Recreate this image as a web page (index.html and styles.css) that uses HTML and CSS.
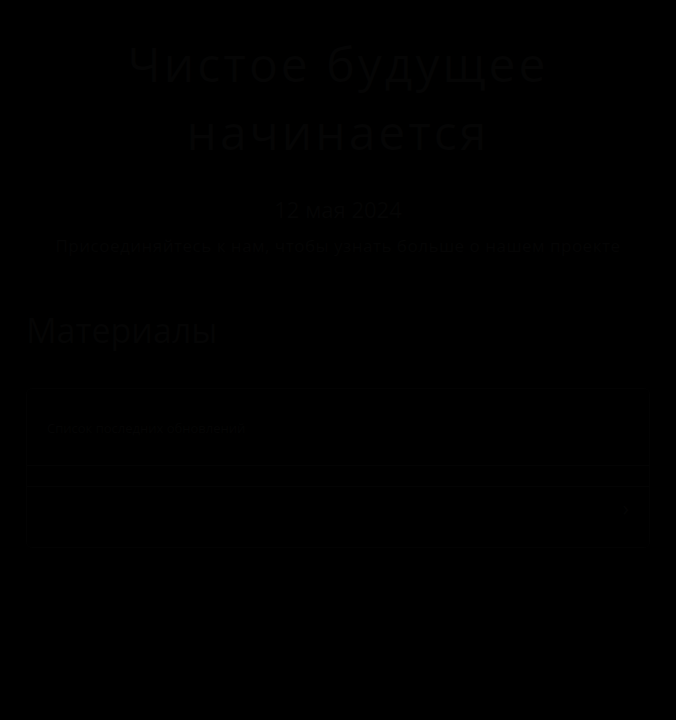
FILE: index.html
```html
<!DOCTYPE html>
<html lang="ru">
<head>
<meta charset="utf-8">
<title>Page</title>
<link rel="stylesheet" href="styles.css">
</head>
<body>
<main class="page">
  <header class="hero">
    <h1 class="hero-title">Чистое будущее<br>начинается</h1>
    <p class="hero-date">12 мая 2024</p>
    <p class="hero-lead">Присоединяйтесь к нам, чтобы узнать больше о нашем проекте</p>
  </header>
  <section class="section">
    <h2 class="section-title">Материалы</h2>
    <div class="card">
      <p class="section-note">Список последних обновлений</p>
      <div class="table">
        <div class="row"></div>
        <div class="row row-last"><span class="row-icon">›</span></div>
      </div>
    </div>
  </section>
</main>
</body>
</html>
```
FILE: styles.css
```css
html, body {
  margin: 0;
  padding: 0;
  background: #000;
}
body {
  font-family: "Open Sans", "DejaVu Sans", sans-serif;
  color: #050505;
}
.page {
  padding: 30px 26px 0;
}
.hero {
  text-align: center;
}
.hero-title {
  margin: 0;
  font-size: 48px;
  font-weight: 400;
  line-height: 68px;
  letter-spacing: 3px;
}
.hero-date {
  margin: 28px 0 0;
  font-size: 22px;
  line-height: 30px;
}
.hero-lead {
  margin: 10px 0 0;
  font-size: 17px;
  line-height: 24px;
  letter-spacing: 0.5px;
}
.section {
  margin-top: 50px;
}
.section-title {
  margin: 0;
  font-size: 34px;
  font-weight: 400;
  line-height: 44px;
}
.card {
  margin-top: 36px;
  border: 1px solid #030303;
  border-radius: 6px;
  padding: 30px 0 40px;
}
.section-note {
  margin: 0 0 0 20px;
  font-size: 13px;
  line-height: 18px;
}
.table {
  margin-top: 28px;
  display: flex;
  flex-direction: column;
}
.row {
  height: 20px;
  border-top: 1px solid #040404;
}
.row-last {
  display: flex;
  justify-content: flex-end;
  padding-right: 20px;
}
.row-icon {
  font-size: 22px;
  line-height: 40px;
}
```
